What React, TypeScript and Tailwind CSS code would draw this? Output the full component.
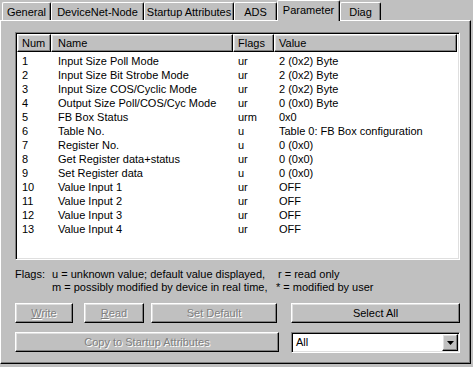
import React from 'react'

const raised =
  'border border-t-white border-l-white border-r-black border-b-black shadow-[inset_-1px_-1px_#808080,inset_1px_1px_#dfdfdf]'
const sunken =
  'border border-t-[#808080] border-l-[#808080] border-r-white border-b-white shadow-[inset_1px_1px_#000,inset_-1px_-1px_#dfdfdf]'
const disabled = 'text-[#808080] [text-shadow:1px_1px_0_#fff]'

const tabs = [
  { label: 'General', w: 'w-[49px]' },
  { label: 'DeviceNet-Node', w: 'w-[93px]' },
  { label: 'Startup Attributes', w: 'w-[90px]' },
  { label: 'ADS', w: 'w-[43px]' },
  { label: 'Parameter', w: 'w-[63px]', active: true },
  { label: 'Diag', w: 'w-[41px]' },
]

const rows: Array<[string, string, string, string]> = [
  ['1', 'Input Size Poll Mode', 'ur', '2 (0x2) Byte'],
  ['2', 'Input Size Bit Strobe Mode', 'ur', '2 (0x2) Byte'],
  ['3', 'Input Size COS/Cyclic Mode', 'ur', '2 (0x2) Byte'],
  ['4', 'Output Size Poll/COS/Cyc Mode', 'ur', '0 (0x0) Byte'],
  ['5', 'FB Box Status', 'urm', '0x0'],
  ['6', 'Table No.', 'u', 'Table 0: FB Box configuration'],
  ['7', 'Register No.', 'u', '0 (0x0)'],
  ['8', 'Get Register data+status', 'ur', '0 (0x0)'],
  ['9', 'Set Register data', 'u', '0 (0x0)'],
  ['10', 'Value Input 1', 'ur', 'OFF'],
  ['11', 'Value Input 2', 'ur', 'OFF'],
  ['12', 'Value Input 3', 'ur', 'OFF'],
  ['13', 'Value Input 4', 'ur', 'OFF'],
]

const cols = ['w-[34px]', 'w-[182px]', 'w-[41px]', 'w-[183px]']
const heads = ['Num', 'Name', 'Flags', 'Value']

function Btn({ children, w, off }: { children: React.ReactNode; w: string; off?: boolean }) {
  return (
    <div className={`${raised} ${w} h-[20px] flex items-center justify-center ${off ? disabled : ''}`}>
      {children}
    </div>
  )
}

export default function App() {
  return (
    <div className="w-[473px] h-[367px] overflow-hidden bg-[#c0c0c0] text-black text-[11px] leading-[13px] font-['Liberation_Sans',Arial,sans-serif]">
      {/* tab strip */}
      <div className="flex items-end h-[20px] pl-[2px]">
        {tabs.map((t) =>
          t.active ? (
            <div
              key={t.label}
              className={`${t.w} relative z-10 -mb-[1px] h-[21px] bg-[#c0c0c0] rounded-t-[2px] border-t border-l border-r border-t-white border-l-white border-r-black shadow-[inset_-1px_0_#808080] flex justify-center pt-[3px]`}
            >
              {t.label}
            </div>
          ) : (
            <div
              key={t.label}
              className={`${t.w} h-[18px] rounded-t-[2px] border-t border-l border-r border-t-white border-l-white border-r-black shadow-[inset_-1px_0_#808080] flex justify-center pt-[3px]`}
            >
              {t.label}
            </div>
          ),
        )}
      </div>

      {/* page */}
      <div className="w-[471px] h-[344px] border border-t-white border-l-white border-r-black border-b-black shadow-[inset_-1px_-1px_#808080]">
        {/* list */}
        <div className={`${sunken} ml-[14px] mt-[11px] w-[445px] h-[228px] bg-white p-[1px]`}>
          <div className="flex h-[18px]">
            {heads.map((h, i) => (
              <div
                key={h}
                className={`${cols[i]} ${raised} bg-[#c0c0c0] flex items-center ${i === 1 ? 'pl-[6px]' : 'pl-[4px]'}`}
              >
                {h}
              </div>
            ))}
          </div>
          <div className="pt-[2px]">
            {rows.map((r) => (
              <div key={r[0]} className="flex h-[14px] items-center">
                {r.map((c, i) => (
                  <div key={i} className={`${cols[i]} ${i === 1 ? 'pl-[7px]' : 'pl-[5px]'} whitespace-nowrap`}>
                    {c}
                  </div>
                ))}
              </div>
            ))}
          </div>
        </div>

        {/* legend */}
        <div className="ml-[14px] mt-[8px] grid grid-cols-[37px_224px_auto]">
          <div>Flags:</div>
          <div>u = unknown value; default value displayed,</div>
          <div className="pl-[2px]">r = read only</div>
          <div />
          <div>m = possibly modified by device in real time,</div>
          <div>* = modified by user</div>
        </div>

        {/* buttons */}
        <div className="ml-[14px] mt-[9px] flex">
          <Btn w="w-[58px]" off>
            <span>
              <span className="underline">W</span>rite
            </span>
          </Btn>
          <div className="ml-[11px]">
            <Btn w="w-[60px]" off>
              <span>
                <span className="underline">R</span>ead
              </span>
            </Btn>
          </div>
          <div className="ml-[7px]">
            <Btn w="w-[126px]" off>
              Set Default
            </Btn>
          </div>
          <div className="ml-[14px]">
            <Btn w="w-[169px]">Select All</Btn>
          </div>
        </div>

        <div className="ml-[14px] mt-[9px] flex">
          <Btn w="w-[264px]" off>
            Copy to Startup Attributes
          </Btn>
          <div className={`${sunken} ml-[12px] w-[169px] h-[21px] bg-white flex items-center p-[1px]`}>
            <div className="flex-1 pl-[3px]">All</div>
            <div className={`${raised} bg-[#c0c0c0] w-[16px] h-[17px] flex items-center justify-center`}>
              <svg width="7" height="4" viewBox="0 0 7 4">
                <path d="M0 0h7L3.5 4z" fill="#000" />
              </svg>
            </div>
          </div>
        </div>
      </div>
    </div>
  )
}
